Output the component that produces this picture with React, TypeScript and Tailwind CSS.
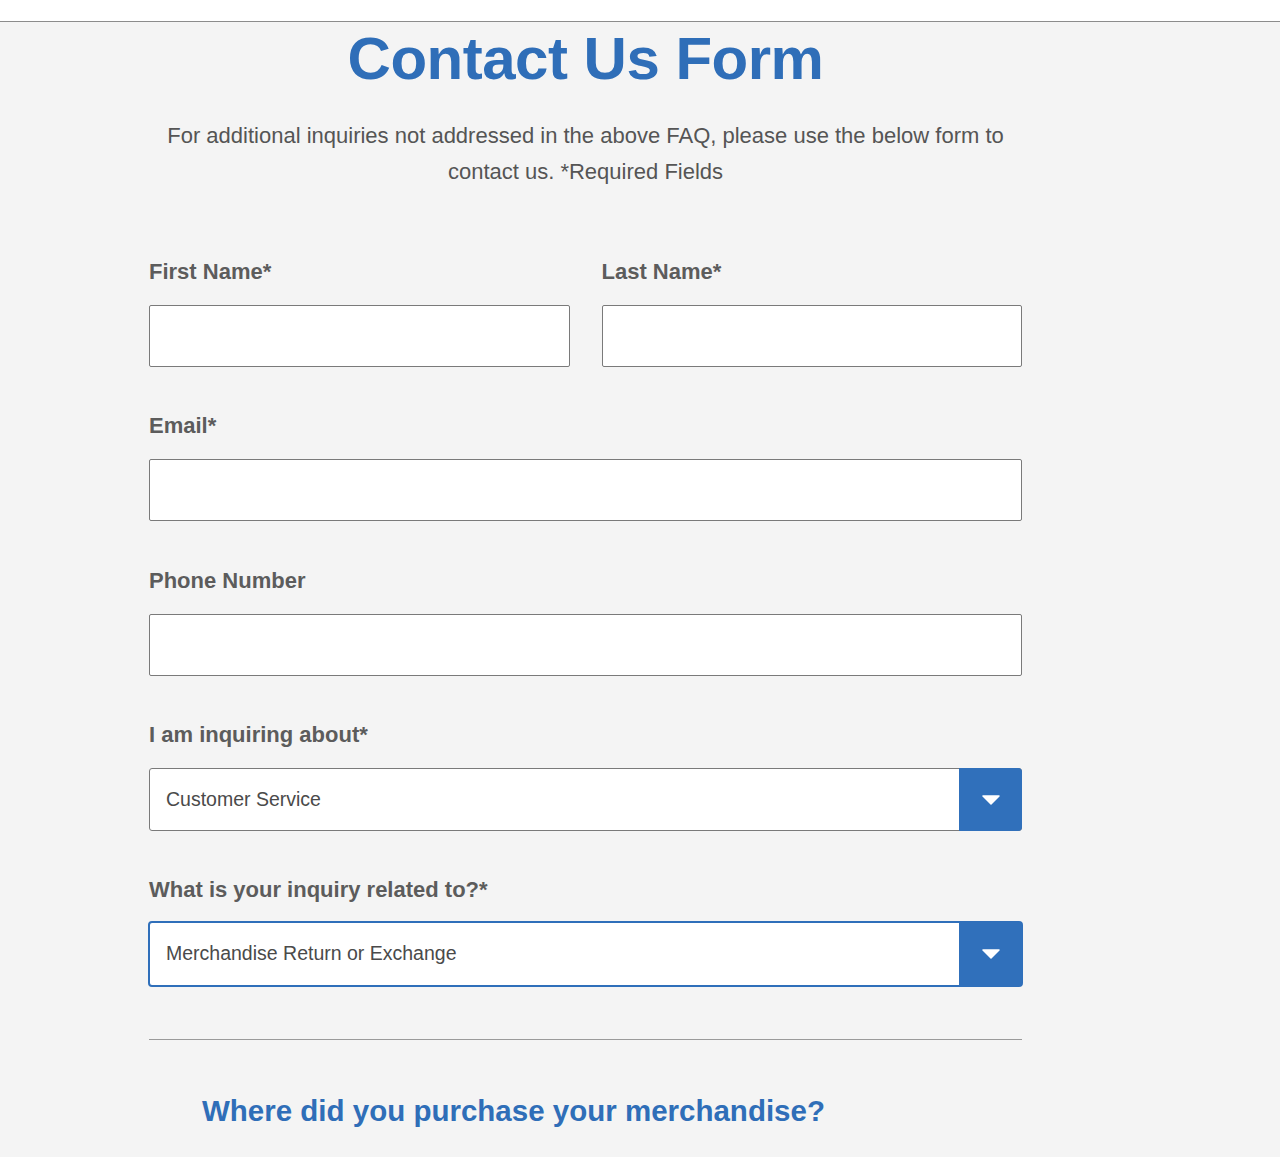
const font = { fontFamily: '"Liberation Sans", Arial, Helvetica, sans-serif' }

function Label({ children }: { children: React.ReactNode }) {
  return <div className="text-[22px] leading-[28px] font-bold text-[#5c5c5c]">{children}</div>
}

function TextInput() {
  return <div className="mt-[19px] h-[62px] w-full rounded-[2px] border border-[#7a7a7a] bg-white" />
}

function Select({ value, focused }: { value: string; focused?: boolean }) {
  return (
    <div
      className={
        focused
          ? "mt-[17px] -mx-px flex h-[66px] rounded-[4px] border-2 border-[#2f6fba] bg-white"
          : "mt-[19px] flex h-[63px] rounded-[3px] border border-[#7a7a7a] bg-white"
      }
    >
      <div className="flex flex-1 items-center pl-4 text-[19.5px] text-[#4a4a4a]">{value}</div>
      <div className="-my-px -mr-px flex w-[63px] items-center justify-center rounded-r-[4px] bg-[#3070bb]">
        <svg width="18" height="10" viewBox="0 0 18 10">
          <path d="M1 1 L17 1 L9 9 Z" fill="#ffffff" stroke="#ffffff" strokeWidth="1.5" strokeLinejoin="round" />
        </svg>
      </div>
    </div>
  )
}

export default function App() {
  return (
    <div className="min-h-screen bg-[#f4f4f4]" style={font}>
      <div className="h-[22px] border-b border-[#8c8c8c] bg-white" />
      <div className="ml-[149px] w-[873px] pb-10">
        <h1 className="mt-[6px] text-center text-[60px] leading-[62px] font-bold tracking-[-0.5px] text-[#2f6eb8]">
          Contact Us Form
        </h1>
        <p className="mx-auto mt-[28px] w-[873px] text-center text-[22px] leading-[36px] text-[#555555]">
          For additional inquiries not addressed in the above FAQ, please use the below form to
          <br />
          contact us. *Required Fields
        </p>

        <div className="mt-[68px] grid grid-cols-2 gap-x-8">
          <div>
            <Label>First Name*</Label>
            <TextInput />
          </div>
          <div>
            <Label>Last Name*</Label>
            <TextInput />
          </div>
        </div>

        <div className="mt-[45px]">
          <Label>Email*</Label>
          <TextInput />
        </div>

        <div className="mt-[46px]">
          <Label>Phone Number</Label>
          <TextInput />
        </div>

        <div className="mt-[45px]">
          <Label>I am inquiring about*</Label>
          <Select value="Customer Service" />
        </div>

        <div className="mt-[45px]">
          <Label>What is your inquiry related to?*</Label>
          <Select value="Merchandise Return or Exchange" focused />
        </div>

        <div className="mt-[52px] border-t border-[#9a9a9a]" />

        <h2 className="mt-[53px] pl-[53px] text-[29.5px] leading-[36px] font-bold text-[#2f6eb8]">
          Where did you purchase your merchandise?
        </h2>
      </div>
    </div>
  )
}
